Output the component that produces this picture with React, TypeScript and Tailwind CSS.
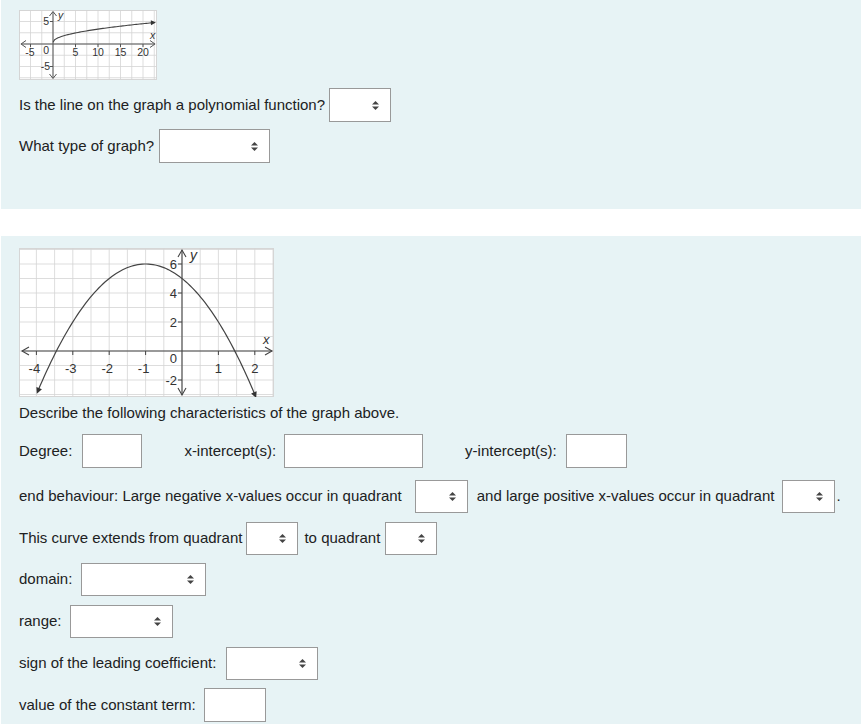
import React from 'react'

const LABEL_FONT = '"Liberation Sans", Arial, sans-serif'

function Arrows() {
  return (
    <svg width="7" height="9" viewBox="0 0 7 9" className="shrink-0">
      <polygon points="0,3.6 3.5,0 7,3.6" fill="#444" />
      <polygon points="0,5.4 7,5.4 3.5,9" fill="#444" />
    </svg>
  )
}

function Select({ w, h = 'h-[33px]', cls = '' }: { w: string; h?: string; cls?: string }) {
  return (
    <div className={`${w} ${h} ${cls} shrink-0 bg-white border border-[#999] flex items-center justify-end pr-[11px]`}>
      <Arrows />
    </div>
  )
}

function Input({ w, cls = '' }: { w: string; cls?: string }) {
  return <div className={`${w} h-[34px] ${cls} shrink-0 bg-white border border-[#999]`} />
}

// small arrowhead at the end of a curve
function Head({ x, y, dx, dy, s = 5 }: { x: number; y: number; dx: number; dy: number; s?: number }) {
  const l = Math.hypot(dx, dy)
  const ux = dx / l
  const uy = dy / l
  const bx = x - ux * s
  const by = y - uy * s
  const px = -uy * s * 0.5
  const py = ux * s * 0.5
  return <polygon points={`${x},${y} ${bx + px},${by + py} ${bx - px},${by - py}`} fill="#333" />
}

function RootGraph() {
  const ox = 34
  const oy = 34
  const u = 4.5
  const vx = Array.from({ length: 13 }, (_, i) => ox + (i - 3) * 11.25)
  const hy = Array.from({ length: 7 }, (_, i) => oy + (i - 3) * 11.25)
  const pts: string[] = []
  for (let i = 0; i <= 60; i++) {
    const t = (22.2 * i) / 60
    const y = 0.4 + 0.92 * Math.sqrt(t)
    pts.push(`${(ox + t * u).toFixed(2)},${(oy - y * u).toFixed(2)}`)
  }
  const endX = ox + 22.2 * u
  const endY = oy - (0.4 + 0.92 * Math.sqrt(22.2)) * u
  return (
    <svg width="138" height="70" className="block bg-white" fontFamily={LABEL_FONT} fontSize="10.5" fill="#333">
      <rect x="0.5" y="0.5" width="137" height="69" fill="white" stroke="#d6d6d6" />
      {vx.map((x) => (
        <line key={'v' + x} x1={x} y1={0} x2={x} y2={70} stroke="#d4d4d4" strokeWidth="0.8" />
      ))}
      {hy.map((y) => (
        <line key={'h' + y} x1={0} y1={y} x2={138} y2={y} stroke="#d4d4d4" strokeWidth="0.8" />
      ))}
      {/* axes */}
      <line x1={3} y1={oy} x2={135} y2={oy} stroke="#555" strokeWidth="1" />
      <polyline points={`7,${oy - 3.5} 2,${oy} 7,${oy + 3.5}`} fill="none" stroke="#555" />
      <polyline points={`131,${oy - 3.5} 136,${oy} 131,${oy + 3.5}`} fill="none" stroke="#555" />
      <line x1={ox} y1={2} x2={ox} y2={68} stroke="#555" strokeWidth="1" />
      <polyline points={`${ox - 3.5},6 ${ox},1.5 ${ox + 3.5},6`} fill="none" stroke="#555" />
      <polyline points={`${ox - 3.5},64 ${ox},68.5 ${ox + 3.5},64`} fill="none" stroke="#555" />
      {[-1, 1, 2, 3, 4].map((k) => (
        <line key={'tx' + k} x1={ox + k * 22.5} y1={oy} x2={ox + k * 22.5} y2={oy + 3} stroke="#555" />
      ))}
      {[-1, 1].map((k) => (
        <line key={'ty' + k} x1={ox - 3} y1={oy - k * 22.5} x2={ox} y2={oy - k * 22.5} stroke="#555" />
      ))}
      <polyline points={pts.join(' ')} fill="none" stroke="#444" strokeWidth="1.1" />
      <Head x={endX + 3} y={endY - 0.1} dx={1} dy={-0.03} s={5} />
      <text x={ox - 23} y={oy + 12} textAnchor="middle">-5</text>
      <text x={ox + 22.5} y={oy + 12} textAnchor="middle">5</text>
      <text x={ox + 45} y={oy + 12} textAnchor="middle">10</text>
      <text x={ox + 67.5} y={oy + 12} textAnchor="middle">15</text>
      <text x={ox + 90} y={oy + 12} textAnchor="middle">20</text>
      <text x={ox - 4} y={oy + 10} textAnchor="end">0</text>
      <text x={ox - 4} y={oy - 19} textAnchor="end">5</text>
      <text x={ox - 3} y={oy + 26} textAnchor="end">-5</text>
      <text x={ox + 5} y={9} fontStyle="italic">y</text>
      <text x={131} y={29} fontStyle="italic">x</text>
    </svg>
  )
}

const xLabels: [string, number][] = [
  ['-4', -4],
  ['-3', -3],
  ['-2', -2],
  ['-1', -1],
  ['1', 1],
  ['2', 2],
]

function ParabolaGraph() {
  const ox = 163
  const oy = 103
  const gx = 18.2
  const gy = 14.5
  const vx = Array.from({ length: 14 }, (_, i) => ox + (i - 8) * gx)
  const hy = Array.from({ length: 11 }, (_, i) => oy + (i - 7) * gy)
  const a = 0.01094
  const cx = 126.6
  const cy = 16
  const x0 = 19
  const x1 = 236
  const pts: string[] = []
  for (let i = 0; i <= 100; i++) {
    const X = x0 + ((x1 - x0) * i) / 100
    pts.push(`${X.toFixed(2)},${(cy + a * (X - cx) ** 2).toFixed(2)}`)
  }
  const yl = (X: number) => cy + a * (X - cx) ** 2
  const sl = (X: number) => 2 * a * (X - cx)
  return (
    <svg width="255" height="149" className="block bg-white" fontFamily={LABEL_FONT} fontSize="13" fill="#333">
      <rect x="0.5" y="0.5" width="254" height="148" fill="white" stroke="#d6d6d6" />
      {vx.map((x) => (
        <line key={'v' + x} x1={x} y1={0} x2={x} y2={149} stroke="#d4d4d4" strokeWidth="0.8" />
      ))}
      {hy.map((y) => (
        <line key={'h' + y} x1={0} y1={y} x2={255} y2={y} stroke="#d4d4d4" strokeWidth="0.8" />
      ))}
      {/* axes */}
      <line x1={3} y1={oy} x2={253} y2={oy} stroke="#444" strokeWidth="1.1" />
      <polyline points={`10,${oy - 4} 3,${oy} 10,${oy + 4}`} fill="none" stroke="#444" strokeWidth="1.1" />
      <polyline points={`246,${oy - 4} 253,${oy} 246,${oy + 4}`} fill="none" stroke="#444" strokeWidth="1.1" />
      <line x1={ox} y1={2} x2={ox} y2={147} stroke="#444" strokeWidth="1.1" />
      <polyline points={`${ox - 4},9 ${ox},2 ${ox + 4},9`} fill="none" stroke="#444" strokeWidth="1.1" />
      <polyline points={`${ox - 4},140 ${ox},147 ${ox + 4},140`} fill="none" stroke="#444" strokeWidth="1.1" />
      {[-4, -3, -2, -1, 1, 2].map((k) => (
        <line key={'tx' + k} x1={ox + k * 2 * gx} y1={oy} x2={ox + k * 2 * gx} y2={oy + 4} stroke="#444" />
      ))}
      {[6, 4, 2, -2].map((k) => (
        <line key={'ty' + k} x1={ox - 4} y1={oy - k * gy} x2={ox} y2={oy - k * gy} stroke="#444" />
      ))}
      <polyline points={pts.join(' ')} fill="none" stroke="#444" strokeWidth="1.2" />
      <Head x={x0 - 1.2} y={yl(x0) + 3} dx={-1} dy={-sl(x0)} s={6} />
      <Head x={x1 + 1.2} y={yl(x1) + 3} dx={1} dy={sl(x1)} s={6} />
      {xLabels.map(([t, k]) => (
        <text key={t} x={ox + k * 2 * gx - (k < 0 ? 2 : 0)} y={oy + 22} textAnchor="middle">
          {t}
        </text>
      ))}
      <text x={ox - 5} y={oy + 12} textAnchor="end">0</text>
      <text x={ox - 5} y={oy - 6 * gy + 5} textAnchor="end">6</text>
      <text x={ox - 5} y={oy - 4 * gy + 5} textAnchor="end">4</text>
      <text x={ox - 5} y={oy - 2 * gy + 5} textAnchor="end">2</text>
      <text x={ox - 5} y={oy + 2 * gy + 5} textAnchor="end">-2</text>
      <text x={ox + 8} y={12} fontStyle="italic" fontSize="14">y</text>
      <text x={244} y={96} fontStyle="italic" fontSize="13">x</text>
    </svg>
  )
}

export default function App() {
  return (
    <div className="min-h-screen bg-white font-['Liberation_Sans',Arial,sans-serif] text-[15px] text-[#202122]">
      {/* question 1 */}
      <div className="ml-px h-[209px] bg-[#e7f3f5] pl-[18px] pt-[10px]">
        <RootGraph />
        <div className="mt-[8px] flex h-[34px] items-center">
          <span>Is the line on the graph a polynomial function?</span>
          <Select w="w-[62px]" h="h-[34px]" cls="ml-[4px]" />
        </div>
        <div className="mt-[7px] flex h-[34px] items-center">
          <span>What type of graph?</span>
          <Select w="w-[111px]" h="h-[34px]" cls="ml-[5px]" />
        </div>
      </div>

      {/* question 2 */}
      <div className="ml-px mt-[27px] min-h-[490px] bg-[#e7f3f5] pb-[4px] pl-[18px] pt-[12px]">
        <ParabolaGraph />
        <div className="mt-[6px] leading-[20px]">Describe the following characteristics of the graph above.</div>

        <div className="mt-[11px] flex h-[34px] items-center">
          <span>Degree:</span>
          <Input w="w-[60px]" cls="ml-[10px]" />
          <span className="ml-[42px]">x-intercept(s):</span>
          <Input w="w-[139px]" cls="ml-[8px]" />
          <span className="ml-[42px]">y-intercept(s):</span>
          <Input w="w-[61px]" cls="ml-[9px]" />
        </div>

        <div className="mt-[12px] flex h-[33px] items-center">
          <span>end behaviour: Large negative x-values occur in quadrant</span>
          <Select w="w-[53px]" cls="ml-[13px]" />
          <span className="ml-[9px]">and large positive x-values occur in quadrant</span>
          <Select w="w-[53px]" cls="ml-[8px]" />
          <span className="ml-[1px]">.</span>
        </div>

        <div className="mt-[9px] flex h-[33px] items-center">
          <span>This curve extends from quadrant</span>
          <Select w="w-[52px]" cls="ml-[4px]" />
          <span className="ml-[6px]">to quadrant</span>
          <Select w="w-[52px]" cls="ml-[5px]" />
        </div>

        <div className="mt-[8px] flex h-[33px] items-center">
          <span>domain:</span>
          <Select w="w-[125px]" cls="ml-[9px]" />
        </div>

        <div className="mt-[9px] flex h-[33px] items-center">
          <span>range:</span>
          <Select w="w-[103px]" cls="ml-[8px]" />
        </div>

        <div className="mt-[9px] flex h-[33px] items-center">
          <span>sign of the leading coefficient:</span>
          <Select w="w-[92px]" cls="ml-[10px]" />
        </div>

        <div className="mt-[8px] flex h-[34px] items-center">
          <span>value of the constant term:</span>
          <Input w="w-[62px]" cls="ml-[8px]" />
        </div>
      </div>
    </div>
  )
}
